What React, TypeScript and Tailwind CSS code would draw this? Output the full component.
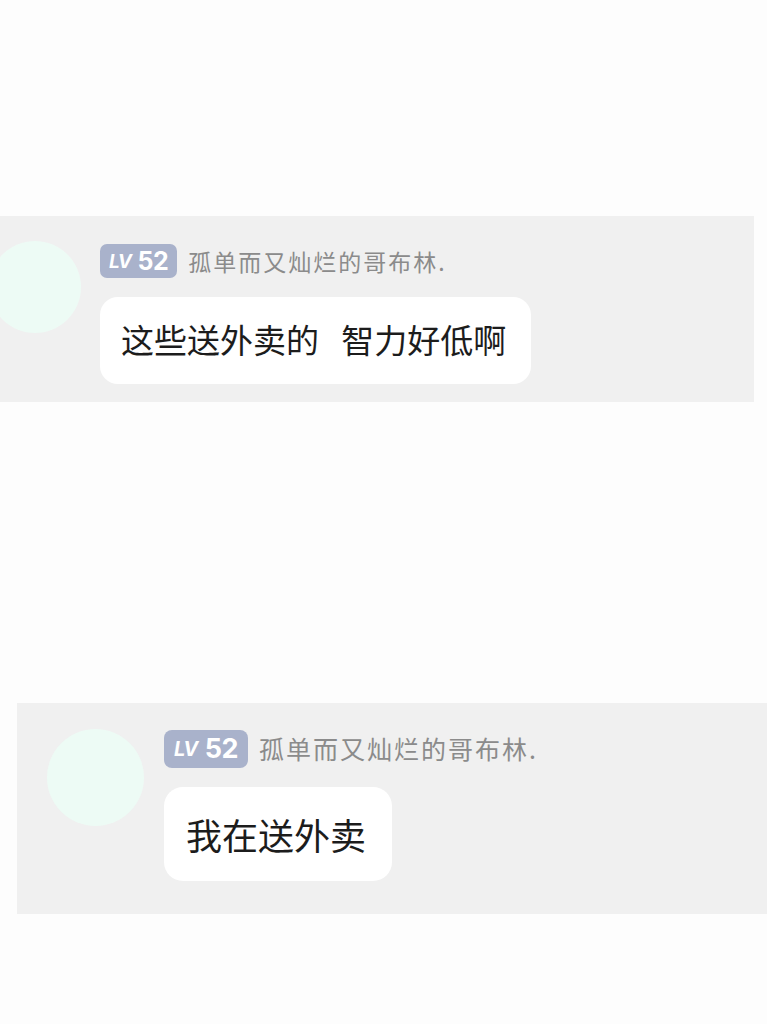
import React from 'react';

interface CommentStyle {
  panel: string;
  avatar: string;
  body: string;
  badge: string;
  lv: string;
  level: string;
  name: string;
  bubble: string;
  text: string;
}

interface CommentProps {
  level: number;
  name: string;
  message: string;
  s: CommentStyle;
}

const small: CommentStyle = {
  panel: 'w-[754px] pt-[25px] pb-[18px]',
  avatar: '-ml-[11px] w-[92px] h-[92px]',
  body: 'ml-[19px] pt-[3px]',
  badge: 'h-[34px] pl-[9px] pr-[9px] rounded-[7px] gap-[6px]',
  lv: 'text-[19px]',
  level: 'text-[25px]',
  name: 'ml-[11px] text-[23px] tracking-[2px]',
  bubble: 'mt-[18px] h-[87px] pl-[21px] pr-[25px] rounded-[18px]',
  text: 'text-[33px]',
};

const large: CommentStyle = {
  panel: 'ml-[17px] flex-1 pt-[26px] pb-[33px] pl-[30px]',
  avatar: 'w-[97px] h-[97px]',
  body: 'ml-[20px] pt-[1px]',
  badge: 'h-[38px] pl-[10px] pr-[10px] rounded-[8px] gap-[7px]',
  lv: 'text-[20px]',
  level: 'text-[27px]',
  name: 'ml-[11px] text-[25px] tracking-[2px]',
  bubble: 'mt-[19px] h-[94px] pl-[22px] pr-[26px] rounded-[19px]',
  text: 'text-[36px]',
};

const Comment: React.FC<CommentProps> = ({ level, name, message, s }) => (
  <div className={`flex items-start bg-[#f0f0f0] ${s.panel}`}>
    {/* avatar placeholder */}
    <div className={`shrink-0 rounded-full bg-[#edfbf5] ${s.avatar}`} />
    <div className={`flex flex-col items-start ${s.body}`}>
      <div className="flex items-center">
        <div className={`flex items-center justify-center bg-[#a9b2cb] text-white font-bold font-['Inter',sans-serif] leading-none ${s.badge}`}>
          <span className={`italic tracking-[-0.5px] ${s.lv}`}>LV</span>
          <span className={`tracking-[-0.5px] ${s.level}`}>{level}</span>
        </div>
        <span className={`text-[#8b8b8b] ${s.name}`}>{name}</span>
      </div>
      <div className={`flex items-center bg-white text-[#1c1c1c] whitespace-pre ${s.bubble} ${s.text}`}>
        {message}
      </div>
    </div>
  </div>
);

export default function App() {
  return (
    <div className="min-h-screen w-[767px] overflow-hidden bg-[#fdfdfd] font-['Noto_Sans_CJK_SC','Noto_Sans',sans-serif]">
      <div className="h-[216px]" />
      <Comment level={52} name="孤单而又灿烂的哥布林." message="这些送外卖的   智力好低啊" s={small} />
      <div className="h-[301px]" />
      <div className="flex">
        <Comment level={52} name="孤单而又灿烂的哥布林." message="我在送外卖" s={large} />
      </div>
    </div>
  );
}
